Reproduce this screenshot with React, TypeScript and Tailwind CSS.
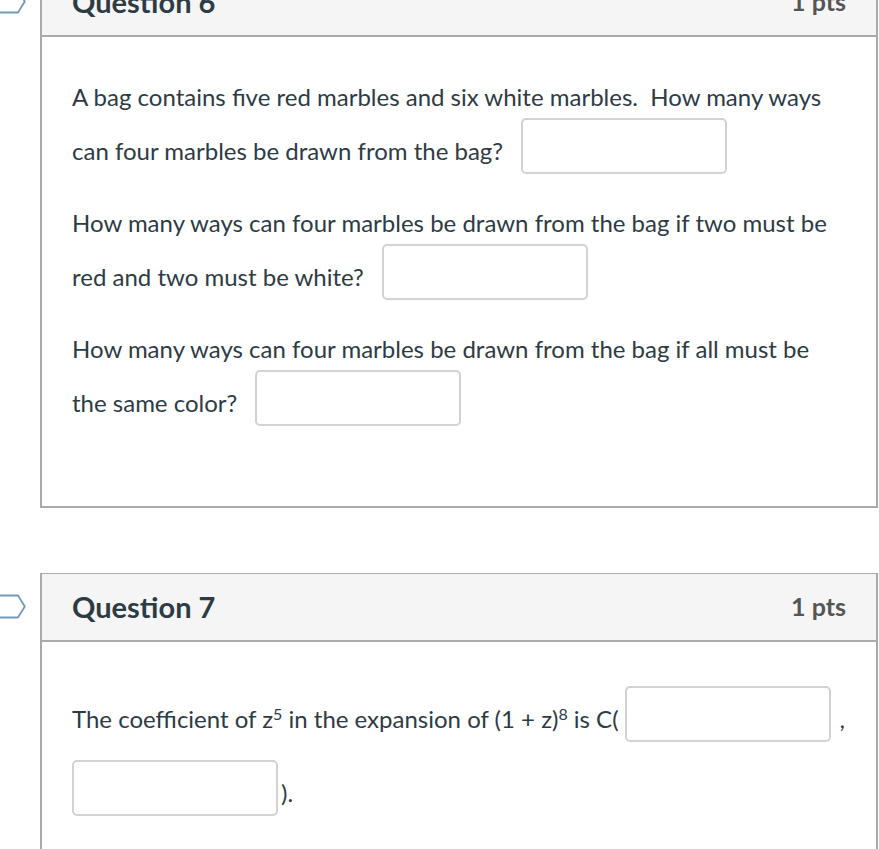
import React from "react";

function Flag({ className }: { className?: string }) {
  return (
    <svg className={className} width="28" height="26" viewBox="0 0 28 26" fill="none">
      <path d="M-2 1.5 H18 L24.8 12.5 L18 23.5 H-2" fill="#ffffff" stroke="#7299b8" strokeWidth="1.8" strokeLinejoin="round" />
    </svg>
  );
}

function Box({ className = "" }: { className?: string }) {
  return (
    <span
      className={
        "inline-block shrink-0 self-start -mt-[6px] h-[56px] w-[206px] rounded-[5px] border-2 border-[#d2d2d2] bg-white " +
        className
      }
    />
  );
}

function Row({ children }: { children: React.ReactNode }) {
  return <div className="flex h-[54px] items-center whitespace-nowrap leading-[54px]">{children}</div>;
}

function Header({ title, pts }: { title: string; pts: string }) {
  return (
    <div className="flex h-[68px] items-center justify-between border-b-2 border-[#aaaaaa] bg-[#f5f5f5] pl-[30px] pr-[30px]">
      <span className="text-[29px] font-bold text-[#2d3b45]">{title}</span>
      <span className="text-[25px] font-bold text-[#555555]">{pts}</span>
    </div>
  );
}

export default function App() {
  return (
    <div className="min-h-screen overflow-hidden bg-white font-['Lato','Noto_Sans',sans-serif] text-[24px] text-[#2d3b45]">
      <div className="-mt-[32px] pr-[1px]">
        {/* Question 6 */}
        <div className="flex">
          <div className="w-[40px] shrink-0">
            <Flag className="mt-[21px]" />
          </div>
          <div className="flex-1 border-x-2 border-b-2 border-t border-[#aaaaaa]">
            <Header title="Question 6" pts="1 pts" />
            <div className="pl-[30px] pr-[30px] pt-[33px] pb-[76px]">
              <Row>
                <span>A bag contains five red marbles and six white marbles.&nbsp; How many ways</span>
              </Row>
              <Row>
                <span>can four marbles be drawn from the bag?</span>
                <Box className="ml-[18px]" />
              </Row>
              <div className="h-[18px]" />
              <Row>
                <span>How many ways can four marbles be drawn from the bag if two must be</span>
              </Row>
              <Row>
                <span>red and two must be white?</span>
                <Box className="ml-[18px]" />
              </Row>
              <div className="h-[18px]" />
              <Row>
                <span>How many ways can four marbles be drawn from the bag if all must be</span>
              </Row>
              <Row>
                <span>the same color?</span>
                <Box className="ml-[18px]" />
              </Row>
            </div>
          </div>
        </div>

        {/* Question 7 */}
        <div className="mt-[65px] flex">
          <div className="w-[40px] shrink-0">
            <Flag className="mt-[21px]" />
          </div>
          <div className="flex-1 border-x-2 border-b-2 border-t border-[#aaaaaa]">
            <Header title="Question 7" pts="1 pts" />
            <div className="pl-[30px] pr-[30px] pt-[50px] pb-[60px]">
              <Row>
                <span>
                  The coefficient of z<sup className="text-[16px]">5</sup> in the expansion of (1 + z)
                  <sup className="text-[16px]">8</sup> is C(
                </span>
                <Box className="ml-[6px]" />
                <span className="ml-[9px]">,</span>
              </Row>
              <div className="h-[20px]" />
              <Row>
                <Box />
                <span className="ml-[3px]">).</span>
              </Row>
            </div>
          </div>
        </div>
      </div>
    </div>
  );
}
